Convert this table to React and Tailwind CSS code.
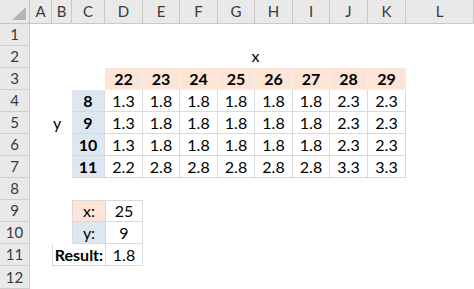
const cols = ['A', 'B', 'C', 'D', 'E', 'F', 'G', 'H', 'I', 'J', 'K', 'L'];
const xs = [22, 23, 24, 25, 26, 27, 28, 29];
const table = [
  [8, ['1.3', '1.8', '1.8', '1.8', '1.8', '1.8', '2.3', '2.3']],
  [9, ['1.3', '1.8', '1.8', '1.8', '1.8', '1.8', '2.3', '2.3']],
  [10, ['1.3', '1.8', '1.8', '1.8', '1.8', '1.8', '2.3', '2.3']],
  [11, ['2.2', '2.8', '2.8', '2.8', '2.8', '2.8', '3.3', '3.3']],
];

const line = 'border-[#dadada]';

const Cell = ({ row, col, span = 1, className = '', children }) => (
  <div
    className={`flex items-center justify-center ${className}`}
    style={{ gridRow: row, gridColumn: `${col} / span ${span}` }}
  >
    {children}
  </div>
);

export default function App() {
  return (
    <div
      className="grid w-[474px] h-[289px] overflow-hidden bg-white text-[16px] leading-none text-black grid-cols-[30px_22px_20px_33px_38px_37px_38px_37px_38px_37px_38px_38px_1fr] grid-rows-[24px_repeat(11,22px)_1fr]"
      style={{ fontFamily: 'Lato, "Open Sans", sans-serif' }}
    >
      {/* corner */}
      <Cell row={1} col={1} className="bg-[#e9e9e9] border-r border-b border-[#c4c4c4] relative">
        <svg width="30" height="24" className="absolute inset-0">
          <polygon points="12,20 26,20 26,7" fill="#b5b5b5" />
        </svg>
      </Cell>

      {/* column headers */}
      {cols.map((c, i) => (
        <Cell
          key={c}
          row={1}
          col={i + 2}
          className="bg-[#e9e9e9] border-r border-b border-[#c8c8c8] text-[15px] text-[#3a3a3a]"
        >
          {c}
        </Cell>
      ))}

      {/* row headers */}
      {Array.from({ length: 12 }, (_, i) => (
        <Cell
          key={i}
          row={i + 2}
          col={1}
          className="bg-[#e9e9e9] border-r border-b border-[#cfcfcf] text-[15px] text-[#3a3a3a]"
        >
          {i + 1}
        </Cell>
      ))}

      {/* x label */}
      <Cell row={3} col={8} span={2} className="items-end pb-[4px]">
        x
      </Cell>

      {/* x header row */}
      {xs.map((x, i) => (
        <Cell
          key={x}
          row={4}
          col={i + 5}
          className="bg-[#fce4d6] font-bold border-r border-b border-[#f6efe9]"
        >
          {x}
        </Cell>
      ))}

      {/* y label */}
      <Cell row={6} col={3} className="-translate-x-[5px]">
        y
      </Cell>

      {table.map(([y, vals], r) => (
        <div key={y} className="contents">
          <Cell row={r + 5} col={4} className={`bg-[#dde7f2] font-bold border-r border-b ${line}`}>
            {y}
          </Cell>
          {vals.map((v, i) => (
            <Cell key={i} row={r + 5} col={i + 5} className={`border-r border-b ${line}`}>
              {v}
            </Cell>
          ))}
        </div>
      ))}

      {/* lookup box */}
      <Cell row={10} col={4} className={`bg-[#fce4d6] border border-r-0 ${line}`}>
        x:
      </Cell>
      <Cell row={10} col={5} className={`border ${line}`}>
        25
      </Cell>
      <Cell row={11} col={4} className={`bg-[#dde7f2] border-l border-b ${line}`}>
        y:
      </Cell>
      <Cell row={11} col={5} className={`border-x border-b ${line}`}>
        9
      </Cell>
      <Cell row={12} col={3} span={2} className={`font-bold border-l border-b ${line}`}>
        Result:
      </Cell>
      <Cell row={12} col={5} className={`border-x border-b ${line}`}>
        1.8
      </Cell>
    </div>
  );
}
